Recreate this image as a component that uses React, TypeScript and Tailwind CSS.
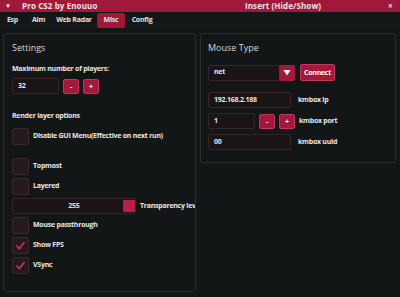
import React from "react";

const font = { fontFamily: '"Open Sans", "Noto Sans", sans-serif' };
const txt = "text-[7px] font-bold text-[#e8e8e8] tracking-[-0.25px] whitespace-nowrap";

function RedBtn({ children, w = "w-[16px] h-[15px]" }: { children: React.ReactNode; w?: string }) {
  return (
    <div className={`${w} bg-[#a3183b] border border-[#c0385a] rounded-[2px] flex items-center justify-center text-white text-[7px] font-bold tracking-[-0.25px] leading-none`}>
      {children}
    </div>
  );
}

function Input({ value, w }: { value: string; w: string }) {
  return (
    <div className={`${w} h-[16px] bg-[#1b1416] border border-[#3a2328] rounded-[2px] flex items-center pl-[5px] text-[7px] font-bold tracking-[-0.25px] text-[#e6e6e6]`}>
      {value}
    </div>
  );
}

function Check({ label, checked = false }: { label: string; checked?: boolean }) {
  return (
    <div className="flex items-center gap-[4px] h-[17px]">
      <div className="w-[17px] h-[17px] bg-[#261a1d] border border-[#3a282c] rounded-[2px] flex items-center justify-center shrink-0">
        {checked && (
          <svg width="11" height="11" viewBox="0 0 11 11">
            <path d="M1.5 5.5 L4.3 8.5 L9.5 2" stroke="#c2335a" strokeWidth="1.8" fill="none" />
          </svg>
        )}
      </div>
      <span className={txt}>{label}</span>
    </div>
  );
}

export default function App() {
  return (
    <div style={font} className="w-[400px] h-[297px] bg-[#121616] flex flex-col overflow-hidden">
      <div className="h-[12px] bg-[#a0193a] flex items-center relative text-[8px] font-bold text-[#f0e0e4] tracking-[0.1px] leading-none">
        <span className="ml-[5px] text-[6px] text-white">▼</span>
        <span className="ml-[11px]">Pro CS2 by Enouuo</span>
        <span className="absolute left-[245px]">Insert (Hide/Show)</span>
        <span className="absolute left-[388px] text-[8px]">×</span>
      </div>
      <div className="h-[17px] bg-[#141718] flex items-center pl-[2px] text-[7px] font-bold tracking-[-0.25px] text-[#e0e0e0]">
        <div className="w-[21px] text-center">Esp</div>
        <div className="w-[31px] text-center">Aim</div>
        <div className="w-[40px] text-center">Web Radar</div>
        <div className="ml-[3px] w-[28px] h-[15px] bg-[#a0193a] rounded-[2px] flex items-center justify-center">Misc</div>
        <div className="w-[34px] text-center">Config</div>
      </div>
      <div className="flex gap-[4px] px-[3px] pt-[4px]">
        <div className="w-[193px] h-[259px] border border-[#272b2c] rounded-[2px] pl-[8px] pt-[7px] overflow-hidden">
          <div className="text-[9px] text-[#d8d8d8] leading-[14px]">Settings</div>
          <div className={`mt-[9px] leading-[10px] ${txt}`}>Maximum number of players:</div>
          <div className="mt-[4px] flex items-center gap-[4px]">
            <Input value="32" w="w-[47px]" />
            <RedBtn>-</RedBtn>
            <RedBtn>+</RedBtn>
          </div>
          <div className={`mt-[17px] leading-[10px] ${txt}`}>Render layer options</div>
          <div className="mt-[7px] flex flex-col gap-[3px]">
            <Check label="Disable GUI Menu(Effective on next run)" />
            <div className="h-[7px]" />
            <Check label="Topmost" />
            <Check label="Layered" />
            <div className="flex items-center gap-[4px] h-[16px] w-[220px]">
              <div className="w-[124px] h-[16px] bg-[#1b1416] border border-[#3a2328] rounded-[2px] relative flex items-center justify-center shrink-0">
                <span className="text-[7px] font-bold tracking-[-0.25px] text-[#e0e0e0]">255</span>
                <div className="absolute right-[0px] top-[1px] w-[12px] h-[12px] bg-[#b81f47] rounded-[1px]" />
              </div>
              <span className={txt}>Transparency level</span>
            </div>
            <Check label="Mouse passthrough" />
            <Check label="Show FPS" checked />
            <Check label="VSync" checked />
          </div>
        </div>
        <div className="w-[196px] h-[130px] border border-[#272b2c] rounded-[2px] pl-[7px] pt-[7px]">
          <div className="text-[9px] text-[#d8d8d8] leading-[14px]">Mouse Type</div>
          <div className="mt-[9px] flex items-center gap-[5px]">
            <div className="w-[87px] h-[16px] bg-[#1b1416] border border-[#3a2328] rounded-[2px] flex items-center justify-between">
              <span className="pl-[5px] text-[7px] font-bold tracking-[-0.25px] text-[#e6e6e6]">net</span>
              <div className="w-[16px] h-[16px] -mr-[1px] bg-[#a3183b] rounded-[2px] flex items-center justify-center">
                <svg width="8" height="7" viewBox="0 0 8 7"><path d="M0.5 1 L7.5 1 L4 6.5 Z" fill="#ffffff" /></svg>
              </div>
            </div>
            <RedBtn w="w-[35px] h-[17px]">Connect</RedBtn>
          </div>
          <div className="mt-[11px] flex flex-col gap-[5px]">
            <div className="flex items-center gap-[7px]">
              <Input value="192.168.2.188" w="w-[83px]" />
              <span className={txt}>kmbox ip</span>
            </div>
            <div className="flex items-center">
              <Input value="1" w="w-[47px]" />
              <div className="ml-[4px]"><RedBtn>-</RedBtn></div>
              <div className="ml-[4px]"><RedBtn>+</RedBtn></div>
              <span className={`ml-[4px] ${txt}`}>kmbox port</span>
            </div>
            <div className="flex items-center gap-[7px]">
              <Input value="00" w="w-[83px]" />
              <span className={txt}>kmbox uuid</span>
            </div>
          </div>
        </div>
      </div>
    </div>
  );
}
